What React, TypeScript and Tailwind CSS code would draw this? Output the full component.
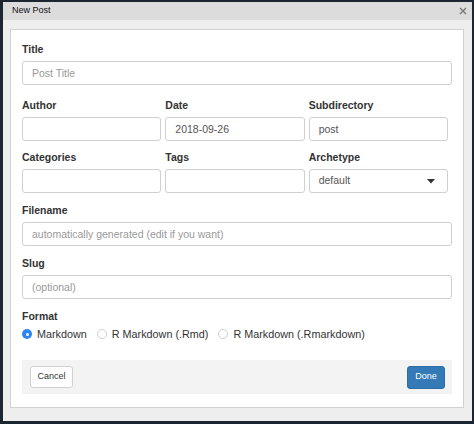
import { useState } from 'react';

const FONT = { fontFamily: '"Liberation Sans", Arial, Helvetica, sans-serif' };

const FORMATS = ['Markdown', 'R Markdown (.Rmd)', 'R Markdown (.Rmarkdown)'];

function Label({ children }: { children: string }) {
  return <div className="h-[14px] text-[10.5px] font-bold leading-[14px] text-[#333]">{children}</div>;
}

function Field({ label, value, placeholder }: { label: string; value?: string; placeholder?: string }) {
  return (
    <div>
      <Label>{label}</Label>
      <input
        defaultValue={value}
        placeholder={placeholder}
        className="mt-[5px] block h-[24px] w-full rounded-[3px] border border-[#cfcfcf] bg-white px-[9px] text-[10.5px] text-[#555] outline-none placeholder:text-[#999]"
      />
    </div>
  );
}

function Radio({ checked, label, onClick }: { checked: boolean; label: string; onClick: () => void }) {
  return (
    <button onClick={onClick} className="flex items-center gap-[5px] text-[10.8px] text-[#333]">
      {checked ? (
        <span className="flex h-[10px] w-[10px] items-center justify-center rounded-full bg-[#2a86f3]">
          <span className="h-[3px] w-[3px] rounded-full bg-white" />
        </span>
      ) : (
        <span className="h-[10px] w-[10px] rounded-full border border-[#d0d0d0] bg-white" />
      )}
      <span className="leading-[14px]">{label}</span>
    </button>
  );
}

export default function App() {
  const [format, setFormat] = useState('Markdown');

  return (
    <div className="h-[424px] w-[474px] bg-[#1c2532] pb-[3px] pl-[3px] pr-[2px] pt-[2px]" style={FONT}>
      <div className="flex h-full flex-col bg-[#eeeeee]">
        <div className="flex h-[18px] shrink-0 items-center justify-between bg-[#dcdcdc] pl-[9px] pr-[5px]">
          <span className="text-[9px] text-[#111]">New Post</span>
          <svg width="8" height="8" viewBox="0 0 8 8" className="text-[#777]">
            <path d="M1 1L7 7M7 1L1 7" stroke="currentColor" strokeWidth="1.4" />
          </svg>
        </div>

        <div className="flex-1 pb-[13px] pl-[7px] pr-[8px] pt-[9px]">
          <div className="h-full border border-[#d2d2d2] bg-white pb-[13px] pl-[11px] pr-[11px] pt-[12px]">
            <Field label="Title" placeholder="Post Title" />

            <div className="mt-[13px] grid w-[426px] grid-cols-3 gap-x-[4px]">
              <Field label="Author" />
              <Field label="Date" value="2018-09-26" />
              <Field label="Subdirectory" value="post" />
            </div>

            <div className="mt-[9px] grid w-[426px] grid-cols-3 gap-x-[4px]">
              <Field label="Categories" />
              <Field label="Tags" />
              <div>
                <Label>Archetype</Label>
                <div className="mt-[5px] flex h-[24px] items-center justify-between rounded-[3px] border border-[#cfcfcf] bg-white pl-[9px] pr-[12px] text-[10.5px] text-[#555]">
                  <span>default</span>
                  <svg width="8" height="5" viewBox="0 0 8 5">
                    <path d="M0 0H8L4 4.5Z" fill="#333" />
                  </svg>
                </div>
              </div>
            </div>

            <div className="mt-[10px]">
              <Field label="Filename" placeholder="automatically generated (edit if you want)" />
            </div>
            <div className="mt-[10px]">
              <Field label="Slug" placeholder="(optional)" />
            </div>

            <div className="mt-[10px]">
              <Label>Format</Label>
              <div className="mt-[4px] flex items-center gap-[10px]">
                {FORMATS.map((f) => (
                  <Radio key={f} label={f} checked={format === f} onClick={() => setFormat(f)} />
                ))}
              </div>
            </div>

            <div className="mt-[19px] flex h-[34px] items-center justify-between bg-[#f3f3f3] pl-[8px] pr-[7px]">
              <button className="h-[22px] w-[43px] rounded-[3px] border border-[#d0d0d0] bg-white text-[9px] text-[#333]">Cancel</button>
              <button className="h-[23px] w-[38px] rounded-[3px] border border-[#2e6da4] bg-[#337ab7] text-[9px] text-white">Done</button>
            </div>
          </div>
        </div>
      </div>
    </div>
  );
}
